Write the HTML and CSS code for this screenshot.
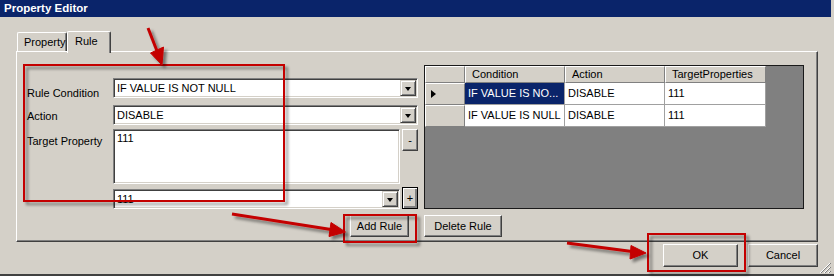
FILE: index.html
```html
<!DOCTYPE html>
<html>
<head>
<meta charset="utf-8">
<title>Property Editor</title>
<link rel="stylesheet" href="styles.css">
</head>
<body>
<div class="window">
  <div class="titlebar">Property Editor</div>
  <div class="content">
    <div class="tabs">
      <div class="tab">Property</div>
      <div class="tab active">Rule</div>
    </div>
    <div class="panel">
      <div class="panel-top">
        <div class="form">
          <div class="row r1">
            <div class="label l1">Rule Condition</div>
            <div class="combo wide"><span class="ctext">IF VALUE IS NOT NULL</span><span class="dd"><i class="down"></i></span></div>
          </div>
          <div class="row r2">
            <div class="label l2">Action</div>
            <div class="combo wide"><span class="ctext">DISABLE</span><span class="dd"><i class="down"></i></span></div>
          </div>
          <div class="row r3">
            <div class="label l3">Target Property</div>
            <div class="textarea">111</div>
            <div class="btn small">-</div>
          </div>
          <div class="row r4">
            <div class="label"></div>
            <div class="combo narrow"><span class="ctext">111</span><span class="dd"><i class="down"></i></span></div>
            <div class="btn small default">+</div>
          </div>
        </div>
        <div class="dgv">
          <div class="dg">
            <div class="rh hdr"></div>
            <div class="ch">Condition</div>
            <div class="ch">Action</div>
            <div class="ch">TargetProperties</div>
            <div class="rh"><i class="cur"></i></div>
            <div class="cell sel">IF VALUE IS NO...</div>
            <div class="cell">DISABLE</div>
            <div class="cell">111</div>
            <div class="rh"></div>
            <div class="cell">IF VALUE IS NULL</div>
            <div class="cell">DISABLE</div>
            <div class="cell">111</div>
          </div>
        </div>
      </div>
      <div class="rule-buttons">
        <div class="btn add">Add Rule</div>
        <div class="btn del">Delete Rule</div>
      </div>
    </div>
    <div class="footer">
      <div class="btn ok">OK</div>
      <div class="btn cancel">Cancel</div>
    </div>
  </div>
  <svg class="grip" width="12" height="12" viewBox="0 0 12 12">
    <line x1="11" y1="1" x2="1" y2="11" stroke="#fff"/>
    <line x1="12" y1="1" x2="2" y2="11" stroke="#808080"/>
    <line x1="11" y1="5" x2="5" y2="11" stroke="#fff"/>
    <line x1="12" y1="5" x2="6" y2="11" stroke="#808080"/>
    <line x1="11" y1="9" x2="9" y2="11" stroke="#fff"/>
    <line x1="12" y1="9" x2="10" y2="11" stroke="#808080"/>
  </svg>
  <svg class="annot" width="834" height="278" viewBox="0 0 834 278">
    <defs>
      <filter id="sh" x="-20%" y="-20%" width="140%" height="140%">
        <feDropShadow dx="3" dy="3" stdDeviation="1.6" flood-color="#000" flood-opacity="0.45"/>
      </filter>
    </defs>
    <g filter="url(#sh)" fill="none" stroke="#c40000" stroke-width="2">
      <rect x="24" y="65" width="260" height="136"/>
      <rect x="344" y="215" width="72" height="27"/>
      <rect x="648" y="234" width="97" height="37"/>
    </g>
    <g filter="url(#sh)" fill="#c40000" stroke="#c40000">
      <line x1="148" y1="28" x2="157" y2="51" stroke-width="3"/>
      <polygon points="163.5,47 150.5,53 162,65" stroke-width="1"/>
      <line x1="232" y1="214" x2="331" y2="229.5" stroke-width="3"/>
      <polygon points="331,222.5 329,236.5 345.5,232" stroke-width="1"/>
      <line x1="567" y1="243" x2="632" y2="251.5" stroke-width="3"/>
      <polygon points="631,245.5 630,259 646,253" stroke-width="1"/>
    </g>
  </svg>
</div>
</body>
</html>
```
FILE: styles.css
```css
html, body {
  margin: 0;
  padding: 0;
  background: #ffffff;
}
body {
  width: 834px;
  height: 278px;
  overflow: hidden;
  font-family: "Liberation Sans", Arial, sans-serif;
  font-size: 11px;
  color: #000;
}
.window {
  position: relative;
  width: 834px;
  height: 274px;
  background: #d4d0c8;
  border-bottom: 2px solid #404040;
}
.titlebar {
  width: 827px;
  height: 17px;
  padding-left: 4px;
  background: #0a246a;
  color: #fff;
  font-weight: bold;
  font-size: 11.5px;
  line-height: 17px;
}
.content {
  padding: 14px 16px 0 16px;
}
.tabs {
  display: flex;
  align-items: flex-start;
  height: 20px;
  padding-left: 1px;
}
.tab {
  box-sizing: border-box;
  margin-top: 1px;
  height: 19px;
  width: 50px;
  padding: 3px 0 0 6px;
  line-height: 13px;
  border-top: 1px solid #fff;
  border-left: 1px solid #fff;
  border-right: 1px solid #404040;
  box-shadow: inset -1px 0 #808080;
  border-radius: 2px 2px 0 0;
}
.tab.active {
  position: relative;
  z-index: 2;
  margin-top: 0;
  height: 22px;
  width: 44px;
  padding: 3px 0 0 7px;
  background: #d4d0c8;
}
.panel {
  box-sizing: border-box;
  width: 802px;
  height: 191px;
  padding: 13px 0 0 10px;
  border: 1px solid;
  border-color: #fff #404040 #404040 #fff;
  box-shadow: inset -1px -1px #808080;
}
.panel-top {
  display: flex;
}
.form {
  width: 391px;
  padding-top: 13px;
}
.row {
  display: flex;
  align-items: flex-start;
}
.r1 { height: 20px; }
.r2 { height: 20px; margin-top: 7px; }
.r3 { height: 55px; margin-top: 4px; }
.r4 { height: 22px; margin-top: 3px; align-items: flex-end; }
.label {
  flex: none;
  width: 86px;
  line-height: 13px;
  white-space: nowrap;
}
.l1 { padding-top: 9px; }
.l2 { padding-top: 5px; }
.l3 { padding-top: 6px; }
.combo, .textarea {
  box-sizing: border-box;
  background: #fff;
  border: 1px solid;
  border-color: #808080 #fff #fff #808080;
  box-shadow: inset 1px 1px #404040, inset -1px -1px #d4d0c8;
  padding: 1px;
}
.combo {
  display: flex;
  height: 20px;
}
.combo.wide { width: 305px; }
.combo.narrow { width: 287px; }
.ctext {
  flex: 1;
  padding-left: 2px;
  line-height: 16px;
  white-space: nowrap;
}
.dd {
  box-sizing: border-box;
  flex: none;
  width: 16px;
  height: 16px;
  background: #d4d0c8;
  border: 1px solid;
  border-color: #d4d0c8 #404040 #404040 #d4d0c8;
  box-shadow: inset 1px 1px #fff, inset -1px -1px #808080;
  display: flex;
  align-items: center;
  justify-content: center;
}
.down {
  width: 0;
  height: 0;
  border-left: 3.5px solid transparent;
  border-right: 3.5px solid transparent;
  border-top: 4px solid #000;
  margin-top: 1px;
}
.textarea {
  width: 287px;
  height: 55px;
  padding: 2px 3px;
  line-height: 13px;
}
.btn {
  box-sizing: border-box;
  display: flex;
  align-items: center;
  justify-content: center;
  background: #d4d0c8;
  border: 1px solid;
  border-color: #fff #404040 #404040 #fff;
  box-shadow: inset -1px -1px #808080;
  line-height: 13px;
  white-space: nowrap;
}
.btn.small {
  width: 16px;
  height: 22px;
  margin-left: 2px;
  font-size: 11px;
}
.btn.default {
  border: 1px solid #000;
  box-shadow: inset 1px 1px #fff, inset -2px -2px #808080;
}
.dgv {
  box-sizing: border-box;
  width: 380px;
  height: 144px;
  margin-left: 6px;
  background: #808080;
  border: 1px solid #1a1a1a;
}
.dg {
  display: grid;
  grid-template-columns: 40px 100px 100px 101px;
  grid-template-rows: 17px 22px 22px;
  width: 341px;
}
.dg > div {
  box-sizing: border-box;
  white-space: nowrap;
  overflow: hidden;
}
.rh, .ch {
  background: #d4d0c8;
  border-top: 1px solid #fff;
  border-left: 1px solid #fff;
  border-right: 1px solid #808080;
  border-bottom: 1px solid #808080;
}
.ch {
  padding-left: 6px;
  line-height: 15px;
}
.rh {
  display: flex;
  align-items: center;
  padding-left: 5px;
}
.cur {
  width: 0;
  height: 0;
  border-top: 4px solid transparent;
  border-bottom: 4px solid transparent;
  border-left: 5px solid #000;
}
.cell {
  background: #fff;
  border-right: 1px solid #a0a0a0;
  border-bottom: 1px solid #a0a0a0;
  padding-left: 3px;
  line-height: 21px;
}
.cell.sel {
  background: #0a246a;
  color: #fff;
}
.rule-buttons {
  display: flex;
  margin-top: 6px;
  padding-left: 323px;
  gap: 15px;
}
.btn.add { width: 59px; height: 22px; }
.btn.del { width: 78px; height: 22px; }
.footer {
  display: flex;
  justify-content: flex-end;
  gap: 10px;
  margin-top: 2px;
}
.btn.ok { width: 75px; height: 23px; }
.btn.cancel { width: 70px; height: 23px; }
.grip {
  position: absolute;
  right: 3px;
  bottom: 0;
}
.annot {
  position: absolute;
  left: 0;
  top: 0;
  pointer-events: none;
}
```
